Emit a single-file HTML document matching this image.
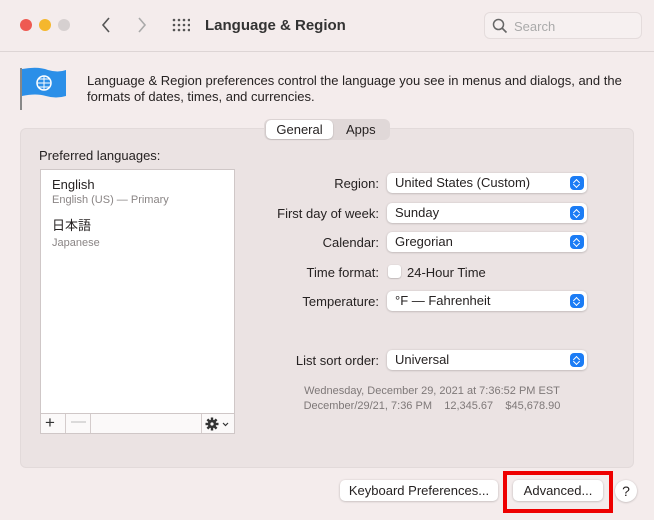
<!DOCTYPE html>
<html><head><style>
*{box-sizing:border-box;margin:0;padding:0}
body{width:654px;height:520px;background:#f4ecec;font-family:"Liberation Sans","Noto Sans CJK JP",sans-serif;color:#262222;position:relative;overflow:hidden;font-size:13px}
.a{position:absolute}
.dot{width:12px;height:12px;border-radius:50%;top:19px}
.pop{position:absolute;left:387px;width:200px;height:20px;background:#fff;border-radius:5px;box-shadow:0 0.5px 2px rgba(0,0,0,.25);padding-left:8px;line-height:20px;font-size:13px}
.pop i{position:absolute;right:3px;top:3px;width:14px;height:14px;border-radius:4px;background:#1b7cf5}
.pop i:before,.pop i:after{content:"";position:absolute;left:4px;width:4px;height:4px;border:solid #fff;border-width:1.3px 0 0 1.3px}
.pop i:before{top:3.5px;transform:rotate(45deg)}
.pop i:after{top:6px;transform:rotate(225deg)}
.lbl{position:absolute;right:275px;font-size:13px;text-align:right;white-space:nowrap}
.btn{position:absolute;height:21px;background:#fff;border-radius:5px;box-shadow:0 0.5px 2px rgba(0,0,0,.25);text-align:center;line-height:21px;font-size:13px}
</style></head><body>
<div class="a dot" style="left:20px;background:#ee5a52"></div>
<div class="a dot" style="left:39px;background:#f5b72d"></div>
<div class="a dot" style="left:58px;background:#d6d0d0"></div>
<svg class="a" style="left:100px;top:16px" width="12" height="18"><path d="M9 2 L3 9 L9 16" fill="none" stroke="#555" stroke-width="1.6"/></svg>
<svg class="a" style="left:136px;top:16px" width="12" height="18"><path d="M3 2 L9 9 L3 16" fill="none" stroke="#aaa" stroke-width="1.6"/></svg>
<svg class="a" style="left:172px;top:18px" width="18" height="14"><g fill="#555"><circle cx="2" cy="2" r="1.3"/><circle cx="7" cy="2" r="1.3"/><circle cx="12" cy="2" r="1.3"/><circle cx="17" cy="2" r="1.3"/><circle cx="2" cy="7" r="1.3"/><circle cx="7" cy="7" r="1.3"/><circle cx="12" cy="7" r="1.3"/><circle cx="17" cy="7" r="1.3"/><circle cx="2" cy="12" r="1.3"/><circle cx="7" cy="12" r="1.3"/><circle cx="12" cy="12" r="1.3"/><circle cx="17" cy="12" r="1.3"/></g></svg>
<div class="a" style="left:205px;top:17px;font-size:15px;font-weight:bold;color:#333">Language &amp; Region</div>
<div class="a" style="left:484px;top:12px;width:158px;height:27px;border:1px solid #e4dcdc;border-radius:6px;background:#f6f0f0"></div>
<svg class="a" style="left:492px;top:18px" width="16" height="16"><circle cx="6.5" cy="6.5" r="5" fill="none" stroke="#666" stroke-width="1.5"/><line x1="10" y1="10" x2="14.5" y2="14.5" stroke="#666" stroke-width="1.6"/></svg>
<div class="a" style="left:514px;top:19px;color:#aaa;font-size:13px">Search</div>
<div class="a" style="left:0;top:51px;width:654px;height:1px;background:#ddd5d5"></div>
<svg class="a" style="left:18px;top:66px" width="50" height="46"><rect x="2" y="2" width="2" height="42" fill="#888"/><path d="M4 3 Q20 0 30 4 Q40 7 48 4 L48 30 Q38 33 28 30 Q18 27 4 30Z" fill="#2b8fe8"/><circle cx="26" cy="17" r="7" fill="none" stroke="#fff" stroke-width="1.5"/><path d="M19 17h14M26 10v14M21 13h10M21 21h10" stroke="#fff" stroke-width="1"/></svg>
<div class="a" style="left:87px;top:73px;line-height:16px;font-size:13px;width:560px">Language &amp; Region preferences control the language you see in menus and dialogs, and the formats of dates, times, and currencies.</div>
<div class="a" style="left:20px;top:128px;width:614px;height:340px;background:#ebe3e3;border-radius:6px;border:1px solid #e2dada"></div>
<div class="a" style="left:264px;top:119px;width:126px;height:21px;background:#e0d8d8;border-radius:6px"></div>
<div class="a" style="left:266px;top:120px;width:67px;height:19px;background:#fff;border-radius:5px;box-shadow:0 0.5px 1.5px rgba(0,0,0,.25);text-align:center;line-height:19px">General</div>
<div class="a" style="left:346px;top:121px;line-height:17px">Apps</div>
<div class="a" style="left:39px;top:148px">Preferred languages:</div>
<div class="a" style="left:40px;top:169px;width:195px;height:265px;background:#fff;border:1px solid #cfc7c7"></div>
<div class="a" style="left:52px;top:177px">English</div>
<div class="a" style="left:52px;top:194px;font-size:11px;color:#8a8585">English (US) — Primary</div>
<div class="a" style="left:52px;top:218px;line-height:16px">日本語</div>
<div class="a" style="left:52px;top:237px;font-size:11px;color:#8a8585">Japanese</div>
<div class="a" style="left:40px;top:413px;width:195px;height:21px;border:1px solid #cfc7c7;background:#fbf9f9"></div>
<div class="a" style="left:65px;top:414px;width:1px;height:19px;background:#d4cccc"></div>
<div class="a" style="left:90px;top:414px;width:1px;height:19px;background:#d4cccc"></div>
<div class="a" style="left:201px;top:414px;width:1px;height:19px;background:#d4cccc"></div>
<div class="a" style="left:45px;top:413px;font-size:17px;color:#333">+</div>
<div class="a" style="left:71px;top:413px;font-size:15px;color:#bbb">—</div>
<svg class="a" style="left:205px;top:417px" width="28" height="14"><g transform="translate(7,7)" fill="#333"><circle r="4.2"/><g stroke="#333" stroke-width="2.4"><line y1="-6.5" y2="6.5"/><line x1="-6.5" x2="6.5"/><line x1="-4.6" y1="-4.6" x2="4.6" y2="4.6"/><line x1="-4.6" y1="4.6" x2="4.6" y2="-4.6"/></g><circle r="1.6" fill="#fbf9f9"/></g><path d="M18 6 L20.5 8.5 L23 6" fill="none" stroke="#333" stroke-width="1.2"/></svg>
<div class="lbl" style="top:176px">Region:</div>
<div class="lbl" style="top:206px">First day of week:</div>
<div class="lbl" style="top:235px">Calendar:</div>
<div class="lbl" style="top:265px">Time format:</div>
<div class="lbl" style="top:294px">Temperature:</div>
<div class="lbl" style="top:353px">List sort order:</div>
<div class="pop" style="top:173px">United States (Custom)<i></i></div>
<div class="pop" style="top:203px">Sunday<i></i></div>
<div class="pop" style="top:232px">Gregorian<i></i></div>
<div class="a" style="left:388px;top:265px;width:13px;height:13px;background:#fff;border-radius:3px;box-shadow:0 0.5px 1.5px rgba(0,0,0,.3)"></div>
<div class="a" style="left:407px;top:265px">24-Hour Time</div>
<div class="pop" style="top:291px">°F — Fahrenheit<i></i></div>
<div class="pop" style="top:350px">Universal<i></i></div>
<div class="a" style="left:232px;top:384px;width:400px;text-align:center;font-size:11px;color:#7e7878;line-height:15px">Wednesday, December 29, 2021 at 7:36:52 PM EST<br>December/29/21, 7:36 PM &nbsp;&nbsp;&nbsp;12,345.67 &nbsp;&nbsp;&nbsp;$45,678.90</div>
<div class="btn" style="left:340px;top:480px;width:158px">Keyboard Preferences...</div>
<div class="a" style="left:503px;top:471px;width:110px;height:42px;border:4px solid #ee0000"></div>
<div class="btn" style="left:513px;top:480px;width:90px">Advanced...</div>
<div class="a" style="left:615px;top:480px;width:22px;height:22px;border-radius:50%;background:#fff;box-shadow:0 0.5px 2px rgba(0,0,0,.25);text-align:center;line-height:22px;font-size:14px">?</div>
</body></html>
